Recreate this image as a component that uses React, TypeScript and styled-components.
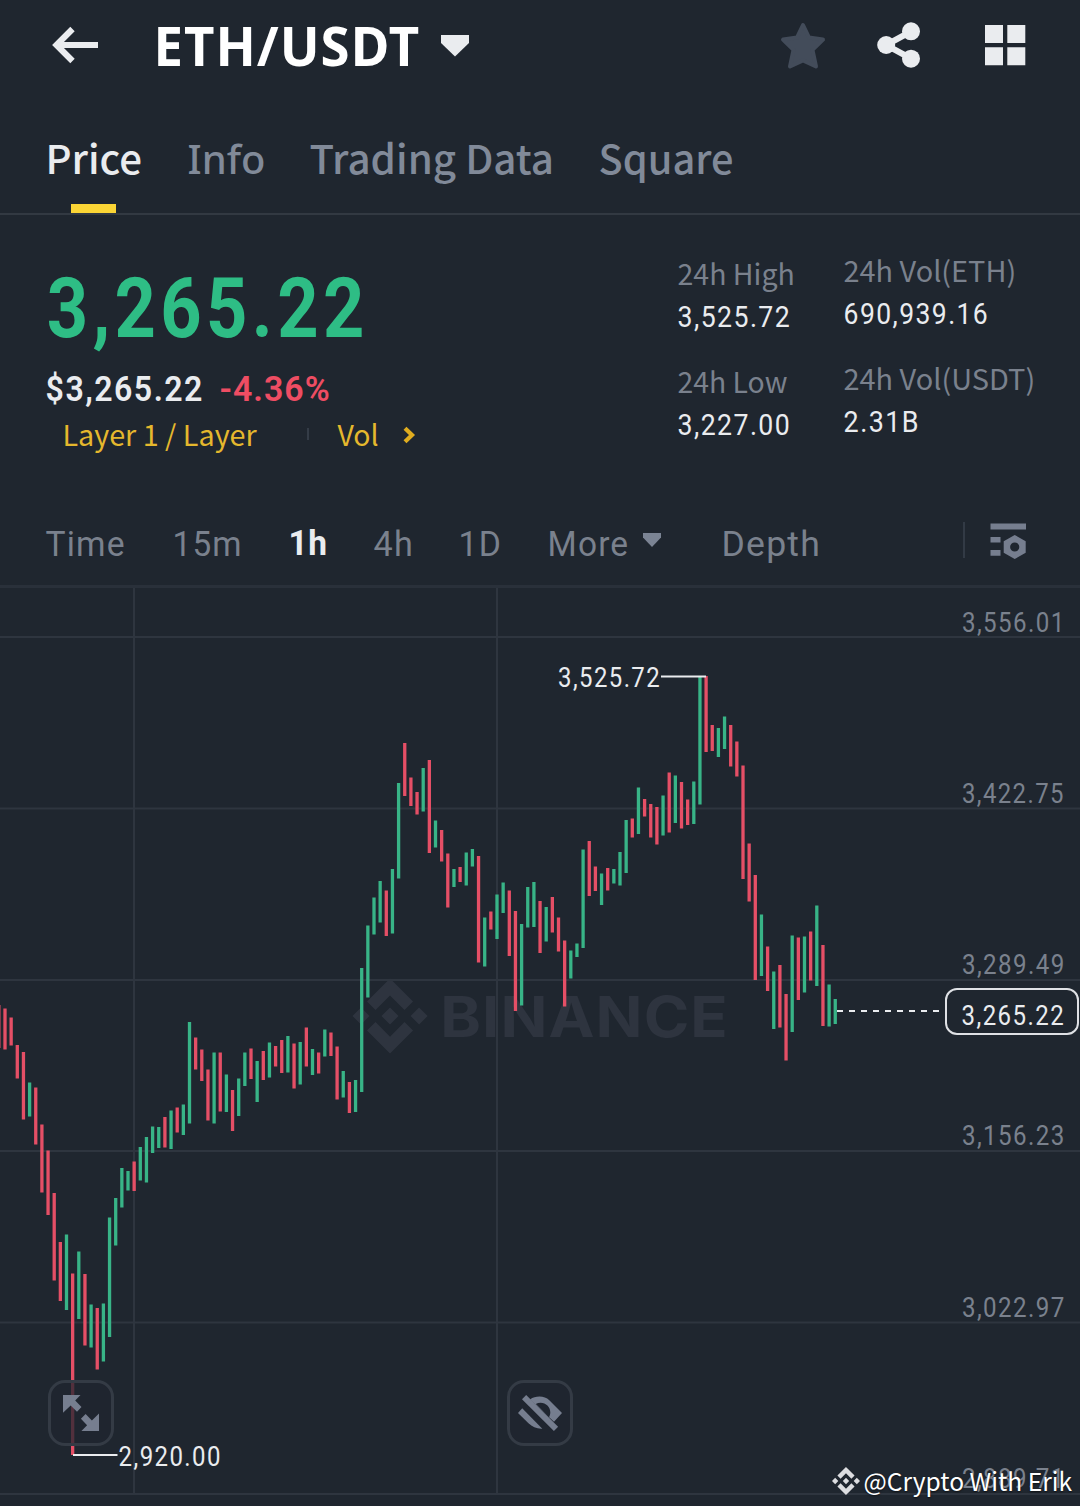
import React, { useLayoutEffect, useState } from "react";
import styled, { createGlobalStyle } from "styled-components";

const SANS = '"Noto Sans CJK SC", "Noto Sans", sans-serif';
const HEAD = '"Noto Sans", "Open Sans", sans-serif';
const NUM = 'Roboto, "Noto Sans", sans-serif';
const BRAND = 'Inter, Roboto, sans-serif';

const C = {
  bg: "#1f262f",
  line: "#2e353f",
  text: "#eaecef",
  muted: "#818a99",
  axis: "#7a818d",
  icon: "#767e8f",
  up: "#2ebd85",
  down: "#ee4d63",
  candleUp: "#38b487",
  candleDown: "#e54f66",
  gold: "#e5b82d",
};

const Global = createGlobalStyle`
  html, body { margin: 0; padding: 0; background: ${C.bg}; }
  *, *::before, *::after { box-sizing: border-box; }
`;

/* ---------- text fitted to an exact ink width ---------- */

type InkSpec = { text: string; family: string; weight: number; size: number; track: number; width: number };

function useInk({ text, family, weight, size, track, width }: InkSpec) {
  const [ink, setInk] = useState({ scale: 1, shift: 0 });
  useLayoutEffect(() => {
    const ctx = document.createElement("canvas").getContext("2d") as any;
    if (!ctx) return;
    ctx.font = `${weight} ${size}px ${family}`;
    ctx.letterSpacing = `${track}px`;
    const m = ctx.measureText(text);
    // half a pixel is kept free on each side for antialiasing
    const scale = (width - 1) / (m.actualBoundingBoxLeft + m.actualBoundingBoxRight);
    setInk({ scale, shift: m.actualBoundingBoxLeft * scale + 0.5 });
  }, [text, family, weight, size, track, width]);
  return ink;
}

const FitBox = styled.span<{ $w: number; $lh: number }>`
  display: block;
  flex: none;
  width: ${(p) => p.$w}px;
  height: ${(p) => p.$lh}px;
  line-height: ${(p) => p.$lh}px;
`;

const FitText = styled.span<{ $family: string; $weight: number; $size: number; $track: number; $color: string }>`
  display: inline-block;
  vertical-align: top;
  white-space: nowrap;
  transform-origin: 0 50%;
  font-family: ${(p) => p.$family};
  font-weight: ${(p) => p.$weight};
  font-size: ${(p) => p.$size}px;
  letter-spacing: ${(p) => p.$track}px;
  color: ${(p) => p.$color};
`;

type FitProps = {
  children: string;
  w: number;
  lh: number;
  size: number;
  family?: string;
  weight?: number;
  track?: number;
  color?: string;
};

function Fit({ children, w, lh, size, family = SANS, weight = 400, track = 0, color = C.text }: FitProps) {
  const ink = useInk({ text: children, family, weight, size, track, width: w });
  return (
    <FitBox $w={w} $lh={lh}>
      <FitText
        $family={family}
        $weight={weight}
        $size={size}
        $track={track}
        $color={color}
        style={{ transform: `translateX(${ink.shift}px) scaleX(${ink.scale})` }}
      >
        {children}
      </FitText>
    </FitBox>
  );
}

type ChartTextProps = {
  children: string;
  x: number;
  y: number;
  w: number;
  size?: number;
  family?: string;
  weight?: number;
  track?: number;
  color?: string;
};

function ChartText({ children, x, y, w, size = 27, family = NUM, weight = 400, track = 1.6, color = C.axis }: ChartTextProps) {
  const ink = useInk({ text: children, family, weight, size, track, width: w });
  return (
    <text
      transform={`translate(${x + ink.shift} ${y}) scale(${ink.scale} 1)`}
      fontFamily={family}
      fontSize={size}
      fontWeight={weight}
      letterSpacing={track}
      fill={color}
    >
      {children}
    </text>
  );
}

/* ---------- page ---------- */

const Screen = styled.main`
  position: relative;
  display: flex;
  flex-direction: column;
  width: 1080px;
  height: 1506px;
  overflow: hidden;
  background: ${C.bg};
`;

const Icon = styled.svg`
  display: block;
  flex: none;
  overflow: visible;
`;

const Header = styled.header`
  display: flex;
  align-items: center;
  height: 90px;
  padding: 0 55px 0 52px;
`;

const TitleWrap = styled.div`
  display: flex;
  align-items: center;
  gap: 22px;
  margin-left: 59px;
  padding-top: 2px;
`;

const Actions = styled.div`
  display: flex;
  align-items: center;
  margin-left: auto;
`;

const ActionGap = styled.span<{ $w: number }>`
  width: ${(p) => p.$w}px;
`;

const Tabs = styled.nav`
  display: flex;
  gap: 46.7px;
  height: 125px;
  padding: 37px 0 0 48px;
  border-bottom: 2px solid #323942;
`;

const Tab = styled.div`
  display: flex;
  flex-direction: column;
  align-items: center;
`;

const TabMark = styled.span`
  width: 45px;
  height: 9px;
  margin: 17px 2px 0 0;
  background: #fbd535;
`;

const Summary = styled.section`
  display: flex;
  height: 283px;
`;

const Quote = styled.div`
  width: 678px;
  padding: 54px 0 0 46px;
`;

const LastPrice = styled.div`
  padding-left: 2px;
`;

const Converted = styled.div`
  display: flex;
  gap: 18px;
  margin-top: 19px;
`;

const Tags = styled.div`
  display: flex;
  align-items: center;
  margin-top: 2.4px;
  padding-left: 18px;
`;

const TagDivider = styled.span`
  width: 2px;
  height: 12px;
  margin: 0 28px 0 49px;
  background: #343c47;
`;

const TagArrow = styled(Icon)`
  margin-left: 25px;
`;

const StatColumn = styled.div<{ $top: number; $w: number }>`
  width: ${(p) => p.$w}px;
  padding-top: ${(p) => p.$top}px;
`;

const Stat = styled.div`
  display: flex;
  flex-direction: column;
  gap: 3px;
  margin-bottom: 23px;
`;

const Intervals = styled.nav`
  display: flex;
  height: 90px;
  padding: 22px 54px 0 45px;
  border-bottom: 3px solid #29303a;
`;

const Interval = styled.div<{ $gap: number; $raise?: number }>`
  display: flex;
  margin-right: ${(p) => p.$gap}px;
  margin-top: ${(p) => -(p.$raise || 0)}px;
`;

const MoreCaret = styled(Icon)`
  margin: 13px 0 0 15px;
`;

const ToolDivider = styled.span`
  width: 2px;
  height: 36px;
  margin: 2px 25.500px 0 auto;
  background: #323a45;
`;

const ToolIcon = styled(Icon)`
  margin-top: 3px;
`;

const ChartArea = styled.section`
  position: relative;
  height: 918px;
`;

const ChartSvg = styled.svg`
  display: block;
`;

const RoundButton = styled.button<{ $left: number }>`
  position: absolute;
  left: ${(p) => p.$left}px;
  top: 792px;
  display: flex;
  align-items: center;
  justify-content: center;
  width: 66px;
  height: 66px;
  padding: 0;
  border: 3px solid #343b45;
  border-radius: 17px;
  background: rgba(31, 38, 47, 0.74);
`;

const PriceTag = styled.div`
  position: absolute;
  left: 945px;
  top: 400px;
  display: flex;
  width: 134px;
  height: 47px;
  padding-left: 15px;
  border: 2px solid #dfe1e5;
  border-radius: 12px;
  background: ${C.bg};
`;

const Credit = styled.div`
  position: absolute;
  left: 832px;
  top: 1462px;
  display: flex;
  align-items: center;
  gap: 4px;
  text-shadow: 0 1px 2px rgba(0, 0, 0, 0.6);
`;

/* ---------- drawings ---------- */

const BINANCE_PATH =
  "M16.624 13.9202l2.7175 2.7154-7.353 7.353-7.353-7.352 2.7175-2.7164 4.6355 4.6595 4.6356-4.6595zm4.6366-4.6366L24 12l-2.7154 2.7164L18.5682 12l2.6924-2.7164zm-9.272.001l2.7163 2.6914-2.7164 2.7174v-.001L9.2721 12l2.7164-2.7154zm-9.2722-.001L5.4088 12l-2.6914 2.6924L0 12l2.7164-2.7164zM11.9885.0115l7.353 7.329-2.7174 2.7154-4.6356-4.6356-4.6355 4.6595-2.7174-2.7154 7.353-7.353z";

const BackIcon = () => (
  <Icon width="46" height="38" viewBox="0 0 46 38" fill="none" stroke="#eaecef" strokeWidth="6.2">
    <path d="M20.5 3 4.5 19l16 16M4 19h42" />
  </Icon>
);

const CaretIcon = () => (
  <Icon width="28" height="22" viewBox="0 0 28 22">
    <path d="M0 0h28v8L14 21.5 0 8z" fill="#eaecef" />
  </Icon>
);

const StarIcon = () => (
  <Icon width="44" height="44" viewBox="0 0 44 44">
    <path
      d="M22 2l6 12.600 14 2L31.500 26.800 35 43.500 22 37.400 9 43.500l3.500-16.700L2 16.600l14-2z"
      fill="#434c5a"
      stroke="#434c5a"
      strokeWidth="4"
      strokeLinejoin="round"
    />
  </Icon>
);

const ShareIcon = () => (
  <Icon width="43" height="46" viewBox="0 0 43 46" fill="#eaecef">
    <path d="M34 9.500 9 23l25 13.500" fill="none" stroke="#eaecef" strokeWidth="6" />
    <circle cx="34" cy="9.300" r="9" />
    <circle cx="9.200" cy="23" r="9" />
    <circle cx="34" cy="36.700" r="9" />
  </Icon>
);

const GridIcon = () => (
  <Icon width="40" height="40" viewBox="0 0 40 40" fill="#eaecef">
    <path d="M0 0h18v18H0zM22.300 0h18v18h-18zM0 22.200h18v18H0zM22.300 22.200h18v18h-18z" />
  </Icon>
);

const ChartSettingsIcon = () => (
  <ToolIcon width="36" height="37" viewBox="0 0 36 37" fill={C.icon}>
    <path d="M.500 .5H36v6H.500zM.500 14h10v5.500H.500zM.500 27h10v5.800H.500z" />
    <path
      fillRule="evenodd"
      d="M24.700 12l11 6.200v11.600l-11 6.200-11-6.200V18.200zM24.700 19.400a4.600 4.600 0 1 0 0 9.200 4.600 4.600 0 0 0 0-9.200z"
    />
  </ToolIcon>
);

const ExpandIcon = () => (
  <Icon width="38" height="38" viewBox="0 0 38 38" fill={C.icon}>
    <path d="M1 1h17.500l-5.300 5.500 6.300 6.500-4.500 4.800-6.300-6.400L1 18.700z" />
    <path d="M37 37H19.400l5.700-5.800-6.200-6.400 4.700-4.800 6.300 6.400 7.100-7z" />
  </Icon>
);

const HideIcon = () => (
  <Icon width="44" height="38" viewBox="0 0 44 38" fill={C.icon}>
    <path d="M8.200 1 4 5.300 35.900 37l4.200-4.300z" />
    <path
      fillRule="evenodd"
      d="M12 5.500c2.800-2 6-2.900 9.500-2.900 3.800 0 7.200 1.300 9.800 3.600L44 19l-8 8.800zM17.800 10 31 23.200c.9-1.500 1.300-3.100 1.300-4.900 0-5.200-4.300-9.500-9.700-9.500-1.800 0-3.400.4-4.800 1.200z"
    />
    <path d="M4.200 14.200 0 19l10.500 10.300c3.800 3.700 8.400 5.700 13.800 5.400z" />
  </Icon>
);

/* ---------- chart data: [direction, top, bottom] per hour ---------- */

const FIRST_X = -1.15;
const STEP = 6.15;

const CANDLES = `R 1005 1048|R 1008.5 1049.5|R 1017.5 1045.5|R 1045 1078.5|R 1052 1119.5|G 1082.5 1116.5|R 1087.5 1144.5|R 1124.5 1192.5|R 1150.5 1215|R 1193 1280.5|R 1242 1301|G 1234.5 1310|R 1273.5 1455|G 1251.5 1319|R 1274 1345.5|G 1304.5 1347.5|R 1308 1369.5|G 1303.5 1361.5|G 1217.5 1337|G 1198 1245.5|G 1168 1207.5|G 1171 1190.5|R 1161.5 1191|G 1147 1180.5|G 1137 1182.5|G 1126.5 1153|G 1127 1148|R 1117 1147.5|G 1110.5 1149|R 1107.5 1132.5|G 1104.5 1135|G 1022 1123.5|R 1037.5 1069.5|R 1049.5 1081|R 1069.5 1120.5|G 1052.5 1123.5|R 1052.5 1111.5|G 1074.5 1112|R 1090 1131|G 1078.5 1116|G 1052.5 1086|R 1048.5 1079|G 1061 1102|R 1051 1080|G 1042.5 1077.5|R 1046 1066.5|R 1040 1073|G 1036 1072.5|R 1043.5 1088.5|G 1042 1084.5|R 1027.5 1066.5|G 1049 1075|R 1052.5 1073.5|G 1029.5 1056.5|R 1032.5 1056|R 1046.5 1099.5|G 1071 1097.5|R 1082 1113|G 1080 1112|G 968 1092|G 925.5 997.5|G 897.5 934.5|G 881 922.5|R 890.5 936|G 869 933.5|G 783 878.5|R 743 796|R 777.5 806|R 792 814.5|G 768 811.5|R 760 853|G 820.5 847.5|R 830 861.5|R 853.5 907.5|G 869 887|R 867 882|G 852.5 885.5|G 849 866.5|R 856 962.5|G 917.5 966.5|R 911.5 929.5|G 894.5 939|G 882.5 913|R 890.5 956|R 911 1011|G 924 1005.5|G 887 927.5|G 882 927|R 901 953|G 907 941.5|R 897 932.5|R 917.5 951.5|R 940.5 1006.5|G 950.5 978.5|G 943.5 957|G 849.5 948|R 841 896|R 866.5 891|G 873.5 905|R 868 890.5|G 869 883.5|G 852 885.5|G 820 873|R 818.5 837.5|G 787.5 834|R 799 816.5|R 804 837.5|R 807 844.5|G 795.5 835.5|R 772.5 832.5|G 775.5 823|R 782 828.5|R 799.5 825|G 781.5 824|G 676 804.5|R 676 752|R 725 751|G 728 757|G 716.5 749|R 725 766.5|R 741.5 776.5|R 765.5 879|R 843.5 901.5|R 875 980|G 914.5 976|R 946.5 991|G 971.5 1029|R 965 1027.5|R 994 1060.5|G 935.5 1032|R 937.5 1000|G 936.5 992.5|R 931.5 980.5|G 905.5 986|R 945 1026|G 984.5 1026.5|G 999 1024`
  .split("|")
  .map((row) => {
    const [dir, top, bottom] = row.split(" ");
    return { up: dir === "G", top: Number(top), bottom: Number(bottom) };
  });

const LEVELS = [
  { label: "3,556.01", line: 637, base: 632, w: 98 },
  { label: "3,422.75", line: 808.5, base: 803, w: 101.5 },
  { label: "3,289.49", line: 980, base: 974, w: 101.5 },
  { label: "3,156.23", line: 1151, base: 1145, w: 101.5 },
  { label: "3,022.97", line: 1322.5, base: 1317, w: 101.5 },
  { label: "2,889.71", line: 1494, base: 1488, w: 98 },
];

function Chart() {
  return (
    <ChartSvg width="1080" height="918" viewBox="0 588 1080 918">
      <g fill="#2e343f">
        <path d={BINANCE_PATH} transform="translate(352.500 978.500) scale(3.130)" />
      </g>
      <ChartText x={443} y={1037} w={282} size={56} family={BRAND} weight={700} track={1} color="#2e343f">
        BINANCE
      </ChartText>
      <g stroke={C.line} strokeWidth="2">
        {LEVELS.map((l) => (
          <line key={l.label} x1="0" x2="1080" y1={l.line} y2={l.line} />
        ))}
        <line x1="134" x2="134" y1="588" y2="1494" />
        <line x1="497" x2="497" y1="588" y2="1494" />
      </g>
      {LEVELS.map((l) => (
        <ChartText key={l.label} x={962.3} y={l.base} w={l.w}>
          {l.label}
        </ChartText>
      ))}
      {CANDLES.map((c, i) => (
        <rect
          key={i}
          x={FIRST_X + i * STEP - 1.65}
          y={c.top}
          width="3.3"
          height={c.bottom - c.top}
          fill={c.up ? C.candleUp : C.candleDown}
        />
      ))}
      <line x1="661" x2="706" y1="676.500" y2="676.500" stroke={C.text} strokeWidth="1.800" />
      <ChartText x={558.5} y={687} w={101.5} color={C.text}>
        3,525.72
      </ChartText>
      <line x1="73" x2="117.500" y1="1455" y2="1455" stroke={C.text} strokeWidth="1.800" />
      <ChartText x={119} y={1466} w={101} color={C.text}>
        2,920.00
      </ChartText>
      <line x1="837" x2="946" y1="1011" y2="1011" stroke="#eaecef" strokeWidth="1.800" strokeDasharray="6 6" />
    </ChartSvg>
  );
}

/* ---------- composed parts ---------- */

const TABS = [
  { label: "Price", w: 93, lh: 60, size: 40, family: SANS, active: true },
  { label: "Info", w: 76, lh: 64, size: 40.6, family: HEAD },
  { label: "Trading Data", w: 241.5, lh: 60, size: 40, family: SANS },
  { label: "Square", w: 133.5, lh: 60, size: 40, family: SANS },
];

const STATS = [
  {
    top: 38.4,
    w: 166,
    rows: [
      { label: "24h High", lw: 116, value: "3,525.72", vw: 111.5 },
      { label: "24h Low", lw: 110, value: "3,227.00", vw: 111.5 },
    ],
  },
  {
    top: 35.4,
    w: 236,
    rows: [
      { label: "24h Vol(ETH)", lw: 171, value: "690,939.16", vw: 143.5 },
      { label: "24h Vol(USDT)", lw: 190, value: "2.31B", vw: 73.5 },
    ],
  },
];

const INTERVALS = [
  { label: "Time", w: 79.5, gap: 49.5 },
  { label: "15m", w: 66.5, gap: 49 },
  { label: "1h", w: 36, gap: 47 },
  { label: "4h", w: 38, gap: 49.5 },
  { label: "1D", w: 39.5, gap: 49.5 },
  { label: "More", w: 79, gap: 62 , caret: true },
  { label: "Depth", w: 95, gap: 0 },
];

const ACTIVE_INTERVAL = "1h";

export default function App() {
  return (
    <Screen>
      <Global />
      <Header>
        <BackIcon />
        <TitleWrap>
          <Fit w={262} lh={70} size={53} family={HEAD} weight={700} track={1} color="#ffffff">
            ETH/USDT
          </Fit>
          <CaretIcon />
        </TitleWrap>
        <Actions>
          <StarIcon />
          <ActionGap $w={52} />
          <ShareIcon />
          <ActionGap $w={65} />
          <GridIcon />
        </Actions>
      </Header>

      <Tabs>
        {TABS.map((t) => (
          <Tab key={t.label}>
            <Fit
              w={t.w}
              lh={t.lh}
              size={t.size}
              family={t.family}
              weight={500}
              color={t.active ? C.text : C.muted}
            >
              {t.label}
            </Fit>
            {t.active && <TabMark />}
          </Tab>
        ))}
      </Tabs>

      <Summary>
        <Quote>
          <LastPrice>
            <Fit w={314.5} lh={80} size={83} family={NUM} weight={700} track={5} color={C.up}>
              3,265.22
            </Fit>
          </LastPrice>
          <Converted>
            <Fit w={156} lh={44} size={35} family={NUM} weight={600} track={1.6}>
              $3,265.22
            </Fit>
            <Fit w={109.5} lh={44} size={35} family={NUM} weight={600} track={1} color={C.down}>
              -4.36%
            </Fit>
          </Converted>
          <Tags>
            <Fit w={194} lh={40} size={28.6} color={C.gold}>
              Layer 1 / Layer
            </Fit>
            <TagDivider />
            <Fit w={41} lh={40} size={28.6} color={C.gold}>
              Vol
            </Fit>
            <TagArrow width="12" height="17" viewBox="0 0 12 17">
              <path d="M2 2.300l7 6.700-7 6.700" fill="none" stroke="#dfac1f" strokeWidth="4.200" />
            </TagArrow>
          </Tags>
        </Quote>
        {STATS.map((col) => (
          <StatColumn key={col.top} $top={col.top} $w={col.w}>
            {col.rows.map((s) => (
              <Stat key={s.label}>
                <Fit w={s.lw} lh={40} size={28.6} color={C.axis}>
                  {s.label}
                </Fit>
                <Fit w={s.vw} lh={42} size={30} family={NUM} track={1.6}>
                  {s.value}
                </Fit>
              </Stat>
            ))}
          </StatColumn>
        ))}
      </Summary>

      <Intervals>
        {INTERVALS.map((t) => {
          const active = t.label === ACTIVE_INTERVAL;
          return (
            <Interval key={t.label} $gap={t.gap} $raise={active ? 1 : 0}>
              <Fit
                w={t.w}
                lh={50}
                size={35}
                family={NUM}
                weight={active ? 700 : 400}
                track={active ? 0.5 : 1.2}
                color={active ? C.text : C.axis}
              >
                {t.label}
              </Fit>
              {t.caret && (
                <MoreCaret width="18" height="14" viewBox="0 0 18 14">
                  <path d="M0 0h18v4.500L9 14 0 4.500z" fill="#7b8494" />
                </MoreCaret>
              )}
            </Interval>
          );
        })}
        <ToolDivider />
        <ChartSettingsIcon />
      </Intervals>

      <ChartArea>
        <Chart />
        <PriceTag>
          <Fit w={102} lh={53} size={27} family={NUM} track={1.6}>
            3,265.22
          </Fit>
        </PriceTag>
        <RoundButton $left={48} aria-label="Expand chart">
          <ExpandIcon />
        </RoundButton>
        <RoundButton $left={507} aria-label="Hide indicators">
          <HideIcon />
        </RoundButton>
      </ChartArea>

      <Credit>
        <Icon width="28" height="28" viewBox="0 0 24 24" fill="#dcdde0">
          <path d={BINANCE_PATH} />
        </Icon>
        <Fit w={209} lh={38} size={24.5} color="#ffffff">
          @Crypto With Erik
        </Fit>
      </Credit>
    </Screen>
  );
}
